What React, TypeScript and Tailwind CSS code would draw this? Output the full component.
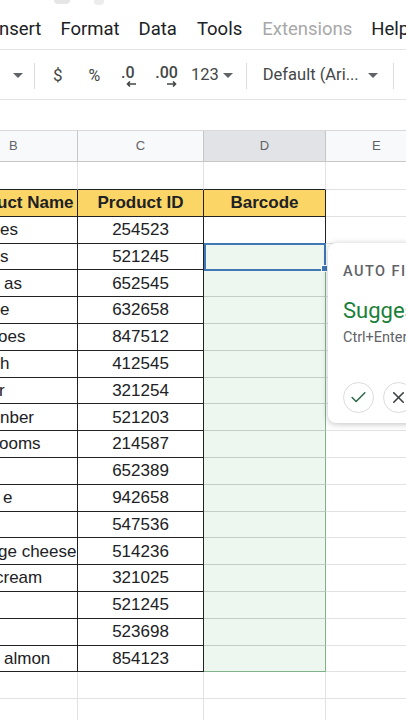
import React from "react";
import { Check, X } from "lucide-react";

type Row = { b: string; bCls: string; c: string };

const rows: Row[] = [
  { b: "es", bCls: "ml-[0px]", c: "254523" },
  { b: "s", bCls: "ml-[0px]", c: "521245" },
  { b: "as", bCls: "ml-[4px]", c: "652545" },
  { b: "e", bCls: "ml-[0px]", c: "632658" },
  { b: "oes", bCls: "ml-[-2px]", c: "847512" },
  { b: "h", bCls: "ml-[0px]", c: "412545" },
  { b: "r", bCls: "ml-[-1px]", c: "321254" },
  { b: "nber", bCls: "ml-[0px]", c: "521203" },
  { b: "ooms", bCls: "ml-[-1px]", c: "214587" },
  { b: "", bCls: "", c: "652389" },
  { b: "e", bCls: "ml-[3px]", c: "942658" },
  { b: "", bCls: "", c: "547536" },
  { b: "ge cheese", bCls: "ml-[-2px]", c: "514236" },
  { b: "cream", bCls: "ml-[-5px]", c: "321025" },
  { b: "", bCls: "", c: "521245" },
  { b: "", bCls: "", c: "523698" },
  { b: "almon", bCls: "ml-[4px]", c: "854123" },
];

const Caret = () => (
  <svg width="10" height="6" viewBox="0 0 10 6">
    <path d="M0 0 L10 0 L5 5 Z" fill="#5f6368" />
  </svg>
);

const Sep = () => <div className="w-px h-[26px] bg-[#dadce0]" />;

export default function App() {
  const cell = "font-['Liberation_Sans',Arial,sans-serif] text-[17px] text-[#202124]";
  return (
    <div className="relative w-[406px] h-[720px] overflow-hidden bg-white font-['Roboto',sans-serif]">
      {/* cut-off title bar */}
      <div className="h-[8px] flex items-start gap-6 pl-[54px]">
        <div className="w-[16px] h-[4px] bg-[#e6e6e6] rounded-b" />
        <div className="w-[10px] h-[5px] bg-[#ececec] rounded-b" />
      </div>

      {/* menu */}
      <div className="h-[41px] pt-[3px] flex items-center text-[18.5px] text-[#202124] whitespace-nowrap">
        <span className="ml-[-6px]">Insert</span>
        <span className="ml-[19px]">Format</span>
        <span className="ml-[19px]">Data</span>
        <span className="ml-[20px]">Tools</span>
        <span className="ml-[20px] text-[#a8a8a8]">Extensions</span>
        <span className="ml-[19px]">Help</span>
      </div>

      {/* toolbar */}
      <div className="h-[51px] pt-[2px] border-t border-b border-[#e3e3e3] flex items-center text-[#444746] whitespace-nowrap">
        <div className="ml-[13px]"><Caret /></div>
        <div className="ml-[11px]"><Sep /></div>
        <span className="ml-[18px] text-[17px]">$</span>
        <span className="ml-[26px] text-[16px]">%</span>
        <div className="ml-[18px] flex flex-col items-center">
          <span className="text-[16px] leading-[18px] font-medium">.0</span>
          <svg width="11" height="6" viewBox="0 0 11 6" className="-mt-[1px] ml-[8px]">
            <path d="M10 3 H2 M4 0.5 L1.5 3 L4 5.5" stroke="#444746" strokeWidth="1.6" fill="none" />
          </svg>
        </div>
        <div className="ml-[18px] flex flex-col items-center">
          <span className="text-[16px] leading-[18px] font-medium">.00</span>
          <svg width="11" height="6" viewBox="0 0 11 6" className="-mt-[1px] ml-[9px]">
            <path d="M1 3 H9 M7 0.5 L9.5 3 L7 5.5" stroke="#444746" strokeWidth="1.6" fill="none" />
          </svg>
        </div>
        <span className="ml-[13px] text-[16.5px]">123</span>
        <div className="ml-[4px]"><Caret /></div>
        <div className="ml-[13px]"><Sep /></div>
        <span className="ml-[16px] text-[16.5px]">Default (Ari...</span>
        <div className="ml-[9px]"><Caret /></div>
        <div className="ml-[15px]"><Sep /></div>
      </div>

      {/* blank formula area */}
      <div className="h-[31px] border-b border-[#d9d9d9]" />

      {/* column header */}
      <div className="h-[31px] flex bg-[#f8f9fa] border-b border-[#c4c7c5] text-[13px] text-[#5f6368] font-['Liberation_Sans',Arial,sans-serif]">
        <div className="w-[78px] border-r border-[#c4c7c5] flex items-center pl-[9px]">B</div>
        <div className="w-[126px] border-r border-[#c4c7c5] flex items-center justify-center">C</div>
        <div className="w-[122px] border-r border-[#c4c7c5] bg-[#e1e3e6] flex items-center justify-center">D</div>
        <div className="flex-1 flex items-center pl-[46px]">E</div>
      </div>

      {/* row 1 */}
      <div className="h-[28px] flex">
        <div className="w-[78px] border-r border-b border-r-[#e2e2e2] border-b-[#222]" />
        <div className="w-[126px] border-r border-b border-r-[#e2e2e2] border-b-[#222]" />
        <div className="w-[122px] border-r border-b border-r-[#e2e2e2] border-b-[#222]" />
        <div className="flex-1 border-b border-[#e2e2e2]" />
      </div>

      {/* table header */}
      <div className="h-[26.8px] flex bg-white">
        <div className={`w-[78px] border-r border-b border-[#222] bg-[#fbd666] flex items-center overflow-hidden whitespace-nowrap font-bold ${cell}`}>
          <span className="ml-[-3px]">uct Name</span>
        </div>
        <div className={`w-[126px] border-r border-b border-[#222] bg-[#fbd666] flex items-center justify-center font-bold ${cell}`}>Product ID</div>
        <div className={`w-[122px] border-r border-b border-[#222] bg-[#fbd666] flex items-center justify-center font-bold ${cell}`}>Barcode</div>
        <div className="flex-1 border-b border-[#e2e2e2]" />
      </div>

      {rows.map((r, i) => {
        const green = i >= 1;
        const last = i === rows.length - 1;
        const dCls = green
          ? last
            ? "bg-[#eef7ef] border-r border-b border-[#7fb38c]"
            : "bg-[#eef7ef] border-r border-b border-r-[#7fb38c] border-b-[#c3cdc5]"
          : "border-r border-b border-[#222]";
        return (
          <div key={i} className="h-[26.8px] flex">
            <div className={`w-[78px] border-r border-b border-[#222] flex items-center overflow-hidden whitespace-nowrap ${cell}`}>
              <span className={r.bCls}>{r.b}</span>
            </div>
            <div className={`w-[126px] border-r border-b border-[#222] flex items-center justify-center ${cell}`}>{r.c}</div>
            <div className={`w-[122px] ${dCls}`} />
            <div className="flex-1 border-b border-[#e2e2e2]" />
          </div>
        );
      })}

      {/* empty rows below */}
      {[0, 1].map((i) => (
        <div key={i} className="h-[26.8px] flex">
          <div className="w-[78px] border-r border-b border-[#e2e2e2]" />
          <div className="w-[126px] border-r border-b border-[#e2e2e2]" />
          <div className="w-[122px] border-r border-b border-[#e2e2e2]" />
          <div className="flex-1 border-b border-[#e2e2e2]" />
        </div>
      ))}

      {/* active cell selection */}
      <div className="absolute left-[204px] top-[243px] w-[122px] h-[28px] border-2 border-[#3f78b5]" />
      <div className="absolute left-[321px] top-[265px] w-[7px] h-[7px] bg-[#3f78b5] border border-white" />

      {/* autofill popup */}
      <div className="absolute left-[328px] top-[243px] w-[120px] h-[180px] bg-white rounded-lg shadow-[0_1px_6px_rgba(0,0,0,0.25)] pl-[15px] pt-[19px]">
        <div className="text-[14.5px] leading-[20px] font-medium tracking-[0.1em] text-[#5f6368] whitespace-nowrap">AUTO FILL</div>
        <div className="mt-[16px] text-[22px] text-[#188038] leading-[26px] whitespace-nowrap">Suggestion</div>
        <div className="mt-[5px] text-[14.5px] leading-[18px] text-[#5f6368] whitespace-nowrap">Ctrl+Enter</div>
        <div className="mt-[35px] flex gap-[9px]">
          <div className="w-[31px] h-[31px] rounded-full border border-[#dadce0] flex items-center justify-center">
            <Check size={19} strokeWidth={2} color="#2f6b4f" />
          </div>
          <div className="w-[31px] h-[31px] rounded-full border border-[#dadce0] flex items-center justify-center">
            <X size={19} strokeWidth={2} color="#3c4043" />
          </div>
        </div>
      </div>
    </div>
  );
}
